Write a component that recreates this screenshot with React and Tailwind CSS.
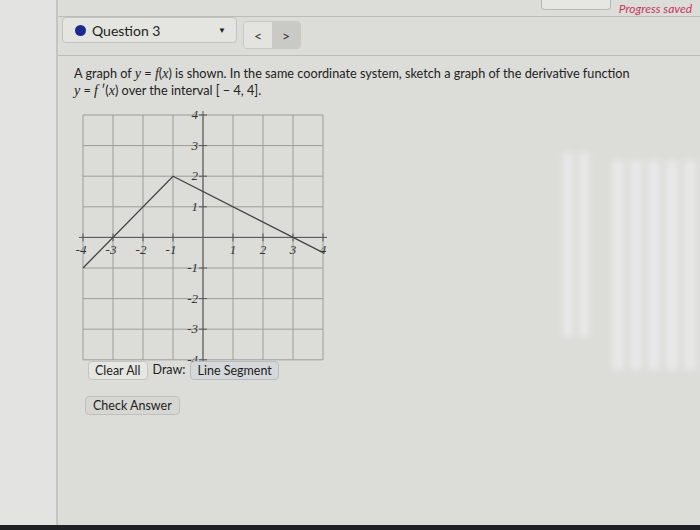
import React from 'react';

const sans = { fontFamily: 'Lato, "Open Sans", sans-serif' };

const UX = 30;
const UY = 30.6;
const X0 = 10;
const Y0 = 8;
const px = (x) => X0 + (x + 4) * UX;
const py = (y) => Y0 + (4 - y) * UY;

const Graph = () => {
    const ticks = [-4, -3, -2, -1, 0, 1, 2, 3, 4];
    return (
        <svg width="262" height="266" viewBox="0 0 262 266" className="block">
            {ticks.map((t) => (
                <g key={t}>
                    <line x1={px(t)} y1={py(4)} x2={px(t)} y2={py(-4)} stroke="#9d9d98" strokeWidth="1" />
                    <line x1={px(-4)} y1={py(t)} x2={px(4)} y2={py(t)} stroke="#9d9d98" strokeWidth="1" />
                </g>
            ))}
            <line x1={px(0)} y1={py(4) - 4} x2={px(0)} y2={py(-4) + 4} stroke="#555" strokeWidth="1" />
            <line x1={px(-4) - 4} y1={py(0)} x2={px(4) + 4} y2={py(0)} stroke="#555" strokeWidth="1" />
            {ticks.filter((t) => t !== 0).map((t) => (
                <g key={'t' + t}>
                    <line x1={px(0) - 4} y1={py(t)} x2={px(0) + 4} y2={py(t)} stroke="#555" />
                    <line x1={px(t)} y1={py(0) - 4} x2={px(t)} y2={py(0) + 4} stroke="#555" />
                </g>
            ))}
            <g fontFamily='"Liberation Serif", serif' fontStyle="italic" fontSize="13" fill="#333">
                {ticks.filter((t) => t !== 0).map((t) => (
                    <text key={'y' + t} x={px(0) - 5} y={py(t) + 4} textAnchor="end">{t}</text>
                ))}
                {ticks.filter((t) => t !== 0).map((t) => (
                    <text key={'x' + t} x={px(t) + (t < 0 ? -2 : 0)} y={py(0) + 17} textAnchor="middle">{t}</text>
                ))}
            </g>
            <polyline
                points={`${px(-4)},${py(-1)} ${px(-1)},${py(2)} ${px(4)},${py(-0.5)}`}
                fill="none"
                stroke="#444"
                strokeWidth="1.3"
            />
        </svg>
    );
};

const M = ({ children }) => (
    <span style={{ fontFamily: '"Liberation Serif", serif' }} className="italic text-[14px]">{children}</span>
);

export default function App() {
    return (
        <div className="w-[700px] h-[530px] flex flex-col bg-[#dcdcd8] overflow-hidden relative" style={sans}>
            <div className="flex flex-1">
                <div className="w-[58px] bg-[#e3e3e1] border-r-2 border-[#c4c4c0]" />
                <div className="flex-1 flex flex-col">
                    <div className="h-[17px] pt-[2px] flex justify-end items-start gap-2 pr-[8px] border-b border-[#bdbdb8]">
                        <div className="w-[70px] h-[10px] -mt-[2px] border-x border-b border-[#b9b9b4] rounded-b bg-[#e6e6e2]" />
                        <span className="text-[12px] leading-[14px] text-[#c8345c] italic">Progress saved</span>
                    </div>
                    <div className="flex items-start gap-[6px] ml-[4px] mt-[0px]">
                        <div className="w-[175px] h-[26px] border border-[#c2c2be] rounded bg-[#e4e4e0] flex items-center pl-[12px] pr-[10px]">
                            <span className="w-[11px] h-[11px] rounded-full bg-[#1b2a8c] mr-[6px]" />
                            <span className="text-[14px] text-[#222]">Question 3</span>
                            <span className="ml-auto text-[8px] text-[#222]">▼</span>
                        </div>
                        <div className="flex mt-[4px] h-[28px] border border-[#c8c8c4] rounded overflow-hidden">
                            <div className="w-[28px] bg-[#e3e3df] flex items-center justify-center text-[14px] text-[#333]">&lt;</div>
                            <div className="w-[28px] bg-[#c9c9c5] flex items-center justify-center text-[14px] text-[#333]">&gt;</div>
                        </div>
                    </div>
                    <div className="mt-[6px] border-b border-[#bdbdb8]" />
                    <div className="pl-[16px] pt-[9px] text-[12.7px] leading-[17px] text-[#222]">
                        <p>A graph of <M>y</M> = <M>f</M>(<M>x</M>) is shown. In the same coordinate system, sketch a graph of the derivative function</p>
                        <p><M>y</M> = <M>f</M> ′(<M>x</M>) over the interval [ − 4, 4].</p>
                    </div>
                    <div className="pl-[15px] mt-[8px]">
                        <Graph />
                    </div>
                    <div className="flex items-center gap-[5px] pl-[30px] -mt-[12px] text-[12.5px] text-[#222]">
                        <button className="px-[6px] h-[19px] border border-[#c4c4c0] bg-[#e6e6e2] rounded-sm">Clear All</button>
                        <span>Draw:</span>
                        <button className="px-[6px] h-[19px] border border-[#b8bcc0] bg-[#d4d8da] rounded-sm">Line Segment</button>
                    </div>
                    <div className="pl-[27px] mt-[12px]">
                        <button className="px-[7px] h-[19px] border border-[#c0c0bc] bg-[#d6d6d2] rounded-sm text-[12.5px] text-[#222]">Check Answer</button>
                    </div>
                </div>
            </div>
            <div className="h-[5px] bg-[#1e2226]" />
            <div className="absolute left-[563px] top-[152px] w-[30px] h-[185px] flex gap-[6px] opacity-50 blur-[3px]">
                <div className="w-[10px] bg-[#f4f6fb]" />
                <div className="w-[10px] bg-[#f4f6fb]" />
            </div>
            <div className="absolute left-[612px] top-[160px] w-[88px] h-[210px] flex gap-[6px] opacity-50 blur-[3px]">
                <div className="w-[12px] bg-[#f4f6fb]" />
                <div className="w-[12px] bg-[#f4f6fb]" />
                <div className="w-[12px] bg-[#f4f6fb]" />
                <div className="w-[12px] bg-[#f4f6fb]" />
                <div className="w-[12px] bg-[#f4f6fb]" />
            </div>
        </div>
    );
}
